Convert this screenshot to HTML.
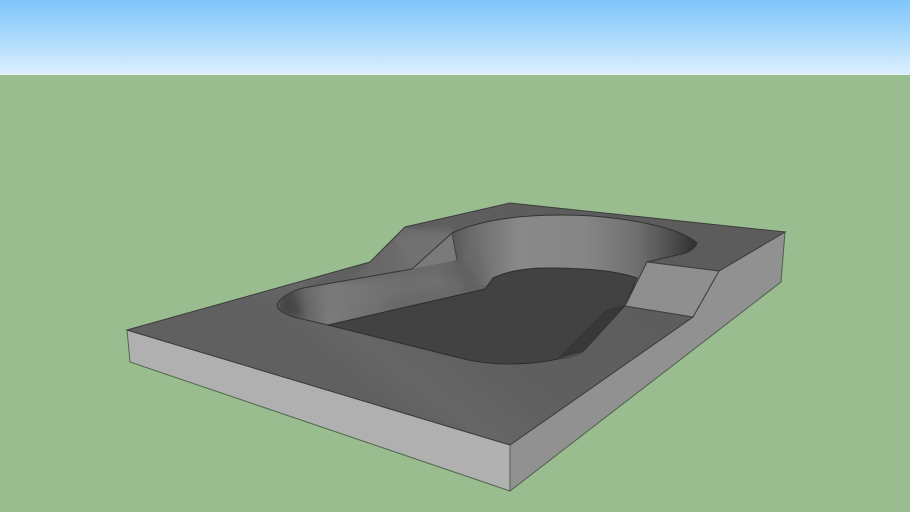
<!DOCTYPE html>
<html>
<head>
<meta charset="utf-8">
<style>
html,body{margin:0;padding:0;width:910px;height:512px;overflow:hidden;background:#9abd90}
svg{display:block}
</style>
</head>
<body>
<svg width="910" height="512" viewBox="0 0 910 512" xmlns="http://www.w3.org/2000/svg">
<defs>
<linearGradient id="sky" x1="0" y1="0" x2="0" y2="1">
<stop offset="0" stop-color="#7fc5fb"/><stop offset="0.5" stop-color="#abdafc"/><stop offset="1" stop-color="#dbeffe"/>
</linearGradient>
<linearGradient id="top" gradientUnits="userSpaceOnUse" x1="600" y1="210" x2="420" y2="440">
<stop offset="0" stop-color="#5c5c5c"/><stop offset="0.6" stop-color="#5f5f5f"/><stop offset="0.85" stop-color="#666"/><stop offset="1" stop-color="#606060"/>
</linearGradient>
<linearGradient id="bowl" gradientUnits="userSpaceOnUse" x1="450" y1="0" x2="698" y2="0">
<stop offset="0" stop-color="#555"/><stop offset="0.08" stop-color="#6a6a6a"/><stop offset="0.28" stop-color="#898989"/><stop offset="0.55" stop-color="#858585"/><stop offset="0.75" stop-color="#707070"/><stop offset="0.9" stop-color="#4c4c4c"/><stop offset="1" stop-color="#2c2c2c"/>
</linearGradient>
<linearGradient id="wall" gradientUnits="userSpaceOnUse" x1="280" y1="0" x2="480" y2="0">
<stop offset="0" stop-color="#484848"/><stop offset="0.08" stop-color="#5a5a5a"/><stop offset="0.25" stop-color="#7c7c7c"/><stop offset="0.6" stop-color="#696969"/><stop offset="0.9" stop-color="#6a6a6a"/><stop offset="1" stop-color="#666"/>
</linearGradient>
<linearGradient id="lramp" gradientUnits="userSpaceOnUse" x1="330" y1="0" x2="420" y2="0">
<stop offset="0" stop-color="#5f5f5f"/><stop offset="1" stop-color="#727272"/>
</linearGradient>
<linearGradient id="patch" gradientUnits="userSpaceOnUse" x1="0" y1="218" x2="0" y2="240">
<stop offset="0" stop-color="#5e5e5e"/><stop offset="1" stop-color="#727272"/>
</linearGradient>
<filter id="b3" x="-20%" y="-20%" width="140%" height="140%"><feGaussianBlur stdDeviation="4"/></filter>
<filter id="soft" x="-5%" y="-5%" width="110%" height="110%"><feGaussianBlur stdDeviation="0.35"/></filter>
<clipPath id="well">
<path d="M452,233 C480,220 520,215 560,215 C620,215 680,227 697,243 C695,250 685,254 677,255 L647,262 L625,306 L607,310 L558,359 L460,358 L328,325 L293,317 C283,313 277,310 277,305 C280,297 292,291 303,288 L412,269 Z"/>
</clipPath>
</defs>
<rect width="910" height="74" fill="url(#sky)"/>
<rect y="74" width="910" height="1" fill="#e4f3f6"/>
<rect y="75" width="910" height="437" fill="#9abd90"/>

<g filter="url(#soft)">
<!-- front and right faces -->
<polygon points="127,330 510,445 510,491 130,362" fill="#b0b0b0" stroke="#4f6a4c" stroke-width="1"/>
<polygon points="785,232 781,282 510,491 510,445 693,317 719,271" fill="#919191" stroke="#4f5f4c" stroke-width="1"/>

<!-- top surface -->
<polygon points="127,330 370,262 405,227 510,203 785,232 719,271 647,262 625,306 693,317 510,445" fill="url(#top)" stroke="#3c3c3c" stroke-width="1"/>

<!-- left ramp -->
<polygon points="335,282 370,263 405,228 452,233 412,269 303,288" fill="url(#lramp)" opacity="0.9"/>
<polygon points="335,273.5 370,262.5 350,279 303,288" fill="#616161"/>
<polygon points="405,228 452,226 452,233 412,269 395,240" fill="url(#patch)" opacity="0.7"/>

<!-- well shading -->
<g clip-path="url(#well)">
<rect x="270" y="210" width="440" height="160" fill="#666"/>
<path d="M452,215 H700 V262 L640,285 H493 L477,285 L455,262 Z" fill="url(#bowl)"/>
<g filter="url(#b3)">
<path d="M278,280 H462 L480,296 L330,330 L278,325 Z" fill="url(#wall)"/>
<path d="M455,262 L470,265 L484,290 L465,296 Z" fill="#626262"/>
<path d="M465,250 L477,250 L492,280 L480,284 Z" fill="#6a6a6a" opacity="0.7"/>
<path d="M300,290 L415,270 L440,265 L450,285 L330,312 Z" fill="#787878" opacity="0.35"/>
<path d="M280,300 L296,292 L304,318 L285,315 Z" fill="#424242" opacity="0.8"/>
</g>
<polygon points="412,269 452,233 457,260" fill="#7a7a7a"/>
</g>
<path d="M452,233 L412,269 L303,288 C292,291 280,297 277,305 C277,310 283,313 293,317 L328,325" stroke="#353535" stroke-width="1" fill="none"/>
<path d="M452,233 C480,220 520,215 560,215 C620,215 680,227 697,243 C695,250 685,254 677,255 L647,262" stroke="#333" stroke-width="1" fill="none"/>
<path d="M452,233 L457,260" stroke="#3f3f3f" stroke-width="1" fill="none"/>

<!-- floor -->
<path d="M328,325 L485,289 L493,278 C510,270 530,268 547,268 C580,268 615,270 637,278 L625,306 L607,310 L558,359 C540,363 525,364 510,364 C490,364 475,362 460,358 Z" fill="#434343" stroke="#2e2e2e" stroke-width="1"/>
<!-- dark facet -->
<polygon points="625,306 607,310 558,359 583,352" fill="#383838"/>
<path d="M558,359 C570,358 578,355 583,352 L625,306" stroke="#333" stroke-width="0.6" fill="none"/>

<!-- right ramp -->
<polygon points="647,262 719,271 693,317 625,306" fill="#8f8f8f" stroke="#3c3c3c" stroke-width="1"/>
</g>
</svg>
</body>
</html>
